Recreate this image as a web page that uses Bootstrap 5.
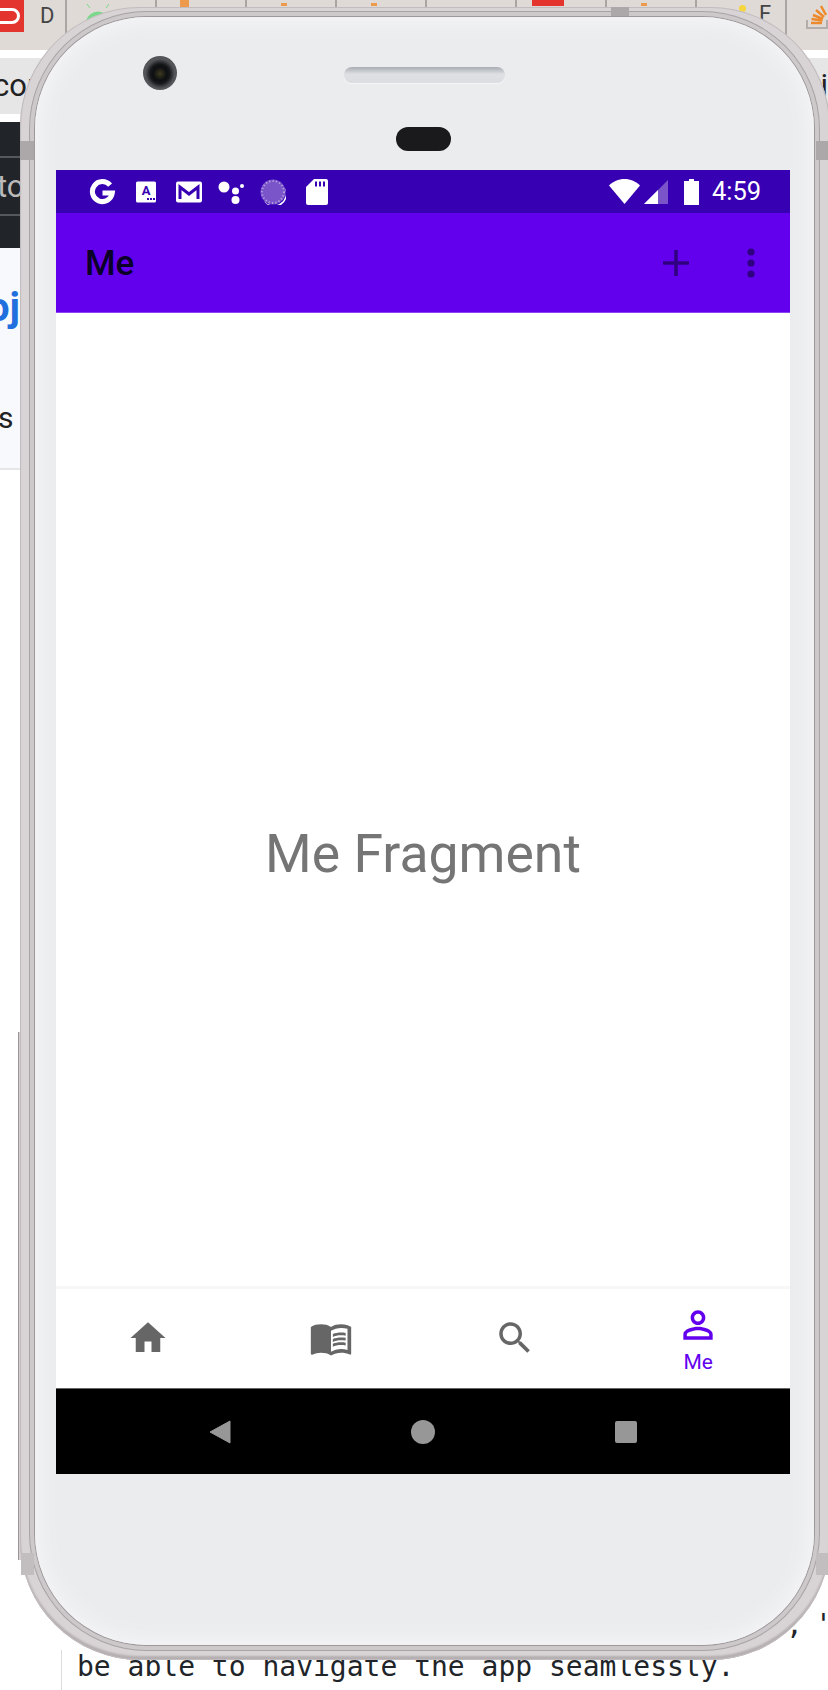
<!DOCTYPE html>
<html lang="en">
<head>
    <meta charset="UTF-8">
    <meta name="viewport" content="width=device-width, initial-scale=1.0">
    <title>Me Fragment</title>
    <link href="https://cdn.jsdelivr.net/npm/bootstrap@5.3.0/dist/css/bootstrap.min.css" rel="stylesheet">
    <style>
        body {
            background-color: #fff;
            width: 828px;
            height: 1690px;
            overflow: hidden;
            font-family: Roboto, sans-serif;
        }
        /* the page behind the emulator */
        .backdrop {
            position: absolute;
            inset: 0;
            overflow: hidden;
        }
        .tab-strip {
            height: 50px;
            background-color: #e0dad6;
        }
        .tab-cell {
            position: relative;
            width: 90px;
            height: 50px;
            border-right: 2px solid #a9a5a3;
            flex: none;
            font-size: 22px;
            line-height: 32px;
            color: #444;
        }
        .tab-first {
            width: 67px;
        }
        .tab-open {
            width: 41px;
            border-right: 0;
        }
        .oracle-tile {
            width: 24px;
            height: 32px;
            overflow: hidden;
            background-color: #e3352e;
        }
        .oracle-ring {
            width: 32px;
            height: 16px;
            margin: 8px 0 0 -12px;
            border: 3px solid #fff;
            border-radius: 8px;
        }
        .tab-mark {
            position: absolute;
            top: 3px;
            left: 34px;
            width: 6px;
            height: 3px;
            background-color: #ee9a4d;
        }
        .tab-mark-tall {
            left: 23px;
            top: 0;
            width: 9px;
            height: 7px;
        }
        .tab-red {
            position: absolute;
            left: 15px;
            top: 0;
            width: 32px;
            height: 6px;
            background-color: #e3352e;
        }
        .tab-dot {
            position: absolute;
            left: 42px;
            top: 5px;
            width: 7px;
            height: 7px;
            border-radius: 50%;
            background-color: #f5d63c;
        }
        .tab-letter {
            position: absolute;
            left: 62px;
            top: -2px;
        }
        .tab-svg {
            position: absolute;
            left: 17px;
            top: 4px;
        }
        .tab-svg-so {
            left: 19px;
        }
        .url-bar {
            height: 56px;
            margin-top: 8px;
            padding-left: 0;
            background-color: #e6e6e6;
            font-size: 31px;
            line-height: 56px;
            color: #222;
        }
        .url-start {
            margin-left: -7px;
        }
        .dark-bar {
            height: 126px;
            margin-top: 8px;
            background-color: #212529;
            color: #bbb;
            font-size: 31px;
        }
        .dark-row {
            height: 34px;
        }
        .dark-row-mid {
            height: 60px;
            line-height: 58px;
            text-indent: -3px;
            border-top: 2px solid #55595d;
            border-bottom: 2px solid #55595d;
        }
        .side-panel {
            height: 222px;
            background-color: #f8f9fc;
            border-bottom: 2px solid #e6e6e6;
        }
        .side-link {
            padding-top: 30px;
            height: 150px;
            margin-left: -13px;
            font-size: 40px;
            font-weight: 700;
            color: #1f6fde;
        }
        .side-text {
            margin-left: -2px;
            font-size: 30px;
            line-height: 40px;
            color: #222;
        }
        .code-text {
            position: absolute;
            font-family: "DejaVu Sans Mono", monospace;
            font-size: 28px;
            line-height: 34px;
            color: #212529;
            white-space: pre;
        }
        .code-line { left: 77px; top: 1650px; }
        .code-comma { left: 786px; top: 1608px; }
        .code-quote { left: 815px; top: 1608px; }
        .code-rule {
            position: absolute;
            left: 61px;
            top: 1650px;
            bottom: 0;
            border-left: 1px solid #ddd;
        }
        .left-rule {
            position: absolute;
            left: 18px;
            top: 1032px;
            width: 4px;
            height: 528px;
            border-left: 1px solid #9a9698;
            background-color: #d3cfd0;
        }
        /* phone */
        .phone-frame {
            position: relative;
            width: 810px;
            height: 1653px;
            margin: 7px 0 0 20px;
            padding: 10px 16px 15px 15px;
            border-radius: 120px;
            background-color: #d8d3d5;
            box-shadow: inset 0 0 0 1px #c2bcbe, inset 0 -4px 2px #b5afb1;
        }
        .phone-ring {
            height: 100%;
            border-radius: 112px;
            box-shadow: 0 0 0 1px #9d989a, 0 0 0 5px #cdc8ca, 0 0 0 6px #a8a3a5;
        }
        .phone-face {
            position: relative;
            height: 100%;
            padding: 0 24px 0 21px;
            border-radius: 112px;
            background-color: #ebecee;
            box-shadow: inset 0 0 22px 3px #f6f6f8;
        }
        .edge-notch {
            position: absolute;
            background-color: #aca7a9;
        }
        .notch-top { left: 591px; top: 0; width: 18px; height: 9px; }
        .notch-lt { left: 0; top: 134px; width: 14px; height: 19px; }
        .notch-rt { right: 2px; top: 134px; width: 12px; height: 19px; }
        .notch-lb { left: 1px; top: 1546px; width: 13px; height: 22px; background-color: #c2bdbf; }
        .notch-rb { right: 2px; top: 1546px; width: 12px; height: 22px; background-color: #c2bdbf; }
        .bezel-top {
            height: 153px;
            padding-top: 50px;
        }
        .camera {
            position: absolute;
            left: 108px;
            top: 39px;
            width: 34px;
            height: 34px;
            border-radius: 50%;
            background: radial-gradient(circle at 50% 52%, #3d3a22 0, #0d0f12 28%, #16181a 40%, #55565a 60%, #48494c 100%);
        }
        .speaker {
            width: 161px;
            height: 16px;
            margin-left: 288px;
            border-radius: 8px;
            background: linear-gradient(#a8adb4, #dfe0e3 45%, #dcdde0);
            box-shadow: 0 1px 1px #f8f8f9;
        }
        .sensor {
            width: 55px;
            height: 24px;
            margin: 44px 0 0 340px;
            border-radius: 12px;
            background-color: #1a1a1c;
        }
        .screen {
            height: 1304px;
            background-color: #fff;
        }
        .status-row {
            height: 43px;
            padding: 0 28px 0 33px;
            background-color: #3700b3;
            color: #fff;
        }
        .status-sd {
            margin-left: 20px;
        }
        .status-battery {
            margin-left: 16px;
        }
        .status-clock {
            width: 50px;
            margin-left: 13px;
            font-size: 25.5px;
            line-height: 43px;
            white-space: nowrap;
        }
        .app-bar {
            height: 100px;
            padding: 0 35px 0 29px;
            background-color: #6200ee;
            border-bottom: 1px solid #8a45f0;
        }
        .app-title {
            padding-top: 4px;
            font-size: 35px;
            font-weight: 500;
            color: #0a0028;
        }
        .app-more {
            margin-left: 58px;
        }
        .screen-body {
            height: 973px;
            padding-top: 110px;
            font-size: 53.5px;
            color: #757575;
            background-color: #fff;
        }
        .tab-bar {
            height: 103px;
            background-color: #fff;
            border-top: 3px solid #f7f7f7;
            border-bottom: 1px solid #666;
        }
        .tab-item {
            flex: 1 1 0;
            height: 100%;
            padding-bottom: 1px;
            color: #666;
            fill: #666;
        }
        .tab-active {
            padding-bottom: 0;
            color: #6200ee;
            fill: #6200ee;
        }
        .tab-label {
            margin-top: 2px;
            font-size: 21px;
            line-height: 26px;
        }
        .sys-bar {
            height: 85px;
            background-color: #000;
            gap: 180px;
        }
        .sys-round {
            width: 24px;
            height: 24px;
            border-radius: 50%;
            background-color: #979797;
        }
        .sys-square {
            width: 22px;
            height: 22px;
            border-radius: 2px;
            background-color: #979797;
        }
    </style>
</head>
<body>

    <div class="backdrop">
        <div class="tab-strip d-flex">
            <div class="tab-cell tab-first d-flex">
                <div class="oracle-tile"><div class="oracle-ring"></div></div>
                <div class="ms-3">D</div>
            </div>
            <div class="tab-cell">
                <svg class="tab-svg" width="28" height="20" viewBox="0 0 28 20"><path d="M2 20a12 12 0 0 1 24 0zM6 4 3 0M22 4l3-4" fill="#7bd88a" stroke="#7bd88a"/></svg>
            </div>
            <div class="tab-cell"><div class="tab-mark tab-mark-tall"></div></div>
            <div class="tab-cell"><div class="tab-mark"></div></div>
            <div class="tab-cell"><div class="tab-mark"></div></div>
            <div class="tab-cell"></div>
            <div class="tab-cell"><div class="tab-red"></div></div>
            <div class="tab-cell"><div class="tab-mark"></div></div>
            <div class="tab-cell">
                <div class="tab-dot"></div>
                <div class="tab-letter">F</div>
            </div>
            <div class="tab-cell tab-open">
                <svg class="tab-svg tab-svg-so" width="22" height="26" viewBox="0 0 22 26"><path d="M1 16v8h20v-8" fill="none" stroke="#b3aeac" stroke-width="2"/><path d="M5 19h11M5.500 15l11 1.500M7 11l10 4M10 6l8 7M15 2l5 9" fill="none" stroke="#ee8a2e" stroke-width="2.500"/></svg>
            </div>
        </div>
        <div class="url-bar d-flex justify-content-between">
            <span class="url-start">con</span>
            <span>i</span>
        </div>
        <div class="dark-bar">
            <div class="dark-row"></div>
            <div class="dark-row-mid">to</div>
        </div>
        <div class="side-panel">
            <div class="side-link">oj</div>
            <div class="side-text">s</div>
        </div>
        <div class="left-rule"></div>
        <div class="code-rule"></div>
        <div class="code-text code-line">be able to navigate the app seamlessly.</div>
        <div class="code-text code-comma">,</div>
        <div class="code-text code-quote">'</div>
    </div>

    <div class="phone-frame">
        <div class="edge-notch notch-top"></div>
        <div class="edge-notch notch-lt"></div>
        <div class="edge-notch notch-rt"></div>
        <div class="edge-notch notch-lb"></div>
        <div class="edge-notch notch-rb"></div>
        <div class="phone-ring">
            <div class="phone-face">
                <div class="camera"></div>
                <div class="bezel-top">
                    <div class="speaker"></div>
                    <div class="sensor"></div>
                </div>

                <div class="screen d-flex flex-column">
                    <div class="status-row d-flex align-items-center">
                        <div class="d-flex align-items-center flex-grow-1">
                            <!-- G -->
                            <svg width="27" height="26" viewBox="0 0 26 26" class="me-3"><path d="M20.600 6.200A10 10 0 1 0 22.800 14H13" fill="none" stroke="#fff" stroke-width="5"/></svg>
                            <!-- A -->
                            <svg width="20" height="22" viewBox="0 0 20 22" class="ms-1 me-3"><rect width="20" height="21" y="0.5" rx="1.5" fill="#fff"/><text x="10" y="13.5" text-anchor="middle" font-family="Roboto, sans-serif" font-size="13" font-weight="700" fill="#3700b3">A</text><rect x="11" y="17" width="2" height="2" fill="#3700b3"/><rect x="14" y="17" width="2" height="2" fill="#3700b3"/><rect x="17" y="17" width="2" height="2" fill="#3700b3"/></svg>
                            <!-- mail -->
                            <svg width="26" height="22" viewBox="0 0 26 22" class="ms-1 me-3"><rect y="0.5" width="26" height="21" rx="2" fill="#fff"/><path d="M4 18V6l9 7 9-7v12" fill="none" stroke="#3700b3" stroke-width="3"/></svg>
                            <!-- assistant dots -->
                            <svg width="26" height="24" viewBox="0 0 26 24" class="me-3"><circle cx="6" cy="7" r="5.5" fill="#fff"/><circle cx="17.5" cy="11" r="3.5" fill="#fff"/><circle cx="24" cy="6" r="2" fill="#fff"/><circle cx="17.5" cy="20" r="4" fill="#fff"/></svg>
                            <!-- loader -->
                            <svg width="26" height="26" viewBox="0 0 26 26"><circle cx="13" cy="13" r="12.5" fill="#7a55c9"/><circle cx="13" cy="13" r="11" fill="none" stroke="#b5a0e2" stroke-width="2" stroke-dasharray="1.2 2.2"/><path d="M4 22a12.500 12.500 0 0 0 21-13 12 12 0 0 1-21 13z" fill="#fff"/></svg>
                            <!-- sd card -->
                            <svg width="22" height="26" viewBox="0 0 22 26" class="status-sd"><path d="M8 0h12a2 2 0 0 1 2 2v22a2 2 0 0 1-2 2H2a2 2 0 0 1-2-2V8z" fill="#fff"/><path d="M9 2.500h2v5H9zM13 2.500h2v5h-2zM17 2.500h2v5h-2z" fill="#3700b3"/></svg>
                        </div>
                        <!-- wifi -->
                        <svg width="31" height="25" viewBox="0 0 31 25"><path d="M15.500 25 0 6.500C4 2.500 9.500 0 15.500 0S27 2.500 31 6.500z" fill="#fff"/></svg>
                        <!-- signal -->
                        <svg width="24" height="24" viewBox="0 0 24 24" class="ms-1"><path d="M24 0v24H0z" fill="#7a55c9"/><path d="M14 10v14H0z" fill="#fff"/></svg>
                        <!-- battery -->
                        <svg width="15" height="26" viewBox="0 0 15 26" class="status-battery"><path d="M5 0h5v2h5v24H0V2h5z" fill="#fff"/></svg>
                        <div class="status-clock">4:59</div>
                    </div>

                    <div class="app-bar d-flex align-items-center justify-content-between">
                        <div class="app-title">Me</div>
                        <div class="d-flex align-items-center">
                            <svg width="26" height="26" viewBox="0 0 26 26"><path d="M13 0v26M0 13h26" stroke="#2f0080" stroke-width="3.500"/></svg>
                            <svg width="8" height="30" viewBox="0 0 8 30" class="app-more"><circle cx="4" cy="4" r="3.600" fill="#2f0080"/><circle cx="4" cy="15" r="3.600" fill="#2f0080"/><circle cx="4" cy="26" r="3.600" fill="#2f0080"/></svg>
                        </div>
                    </div>

                    <div class="screen-body d-flex align-items-center justify-content-center">Me Fragment</div>

                    <div class="tab-bar d-flex">
                        <div class="tab-item d-flex flex-column align-items-center justify-content-center">
                            <svg width="42" height="42" viewBox="0 0 24 24"><path d="M10 20v-6h4v6h5v-8h3L12 3 2 12h3v8z"/></svg>
                        </div>
                        <div class="tab-item d-flex flex-column align-items-center justify-content-center">
                            <svg width="44" height="44" viewBox="0 0 24 24"><path d="M21 5c-1.110-.35-2.330-.5-3.500-.5-1.950 0-4.050.4-5.500 1.500-1.450-1.100-3.550-1.500-5.500-1.500S2.450 4.900 1 6v14.650c0 .25.25.5.5.5.1 0 .15-.05.25-.05C3.100 20.450 5.050 20 6.500 20c1.950 0 4.050.4 5.500 1.500 1.350-.85 3.800-1.500 5.500-1.500 1.650 0 3.350.3 4.750 1.050.1.05.15.05.25.05.25 0 .5-.25.5-.5V6c-.6-.45-1.250-.75-2-1zm0 13.500c-1.100-.35-2.300-.5-3.500-.5-1.700 0-4.150.65-5.500 1.500V8c1.350-.85 3.800-1.500 5.500-1.500 1.200 0 2.400.15 3.500.5v11.500z"/><path d="M17.500 10.500c.88 0 1.730.09 2.500.26V9.240c-.79-.15-1.640-.24-2.500-.24-1.700 0-3.240.29-4.500.83v1.660c1.130-.64 2.700-.99 4.500-.99zM13 12.490v1.660c1.130-.64 2.700-.99 4.500-.99.88 0 1.730.09 2.500.26V11.900c-.79-.15-1.640-.24-2.500-.24-1.700 0-3.240.3-4.500.83zM17.500 14.330c-1.700 0-3.240.29-4.500.83v1.660c1.130-.64 2.700-.99 4.500-.99.88 0 1.730.09 2.500.26v-1.520c-.79-.16-1.640-.24-2.500-.24z"/></svg>
                        </div>
                        <div class="tab-item d-flex flex-column align-items-center justify-content-center">
                            <svg width="42" height="42" viewBox="0 0 24 24"><path d="M15.500 14h-.79l-.28-.27C15.410 12.590 16 11.110 16 9.500 16 5.910 13.090 3 9.500 3S3 5.910 3 9.500 5.910 16 9.500 16c1.610 0 3.090-.59 4.230-1.570l.27.28v.79l5 4.990L20.490 19l-4.990-5zm-6 0C7.010 14 5 11.990 5 9.500S7.010 5 9.500 5 14 7.010 14 9.500 11.990 14 9.500 14z"/></svg>
                        </div>
                        <div class="tab-item tab-active d-flex flex-column align-items-center justify-content-center">
                            <svg width="44" height="44" viewBox="0 0 24 24"><path d="M12 5.900c1.160 0 2.100.94 2.100 2.100s-.94 2.100-2.100 2.100S9.900 9.160 9.900 8s.94-2.100 2.100-2.100m0 9c2.970 0 6.100 1.460 6.100 2.100v1.100H5.900V17c0-.64 3.130-2.100 6.100-2.100M12 4C9.790 4 8 5.790 8 8s1.790 4 4 4 4-1.790 4-4-1.790-4-4-4zm0 9c-2.670 0-8 1.340-8 4v3h16v-3c0-2.660-5.330-4-8-4z"/></svg>
                            <div class="tab-label">Me</div>
                        </div>
                    </div>

                    <div class="sys-bar d-flex align-items-center justify-content-center">
                        <svg width="22" height="24" viewBox="0 0 22 24"><path d="M21 1 1 12l20 11z" fill="#979797" stroke="#979797" stroke-linejoin="round"/></svg>
                        <div class="sys-round"></div>
                        <div class="sys-square"></div>
                    </div>
                </div>
            </div>
        </div>
    </div>

</body>
</html>
